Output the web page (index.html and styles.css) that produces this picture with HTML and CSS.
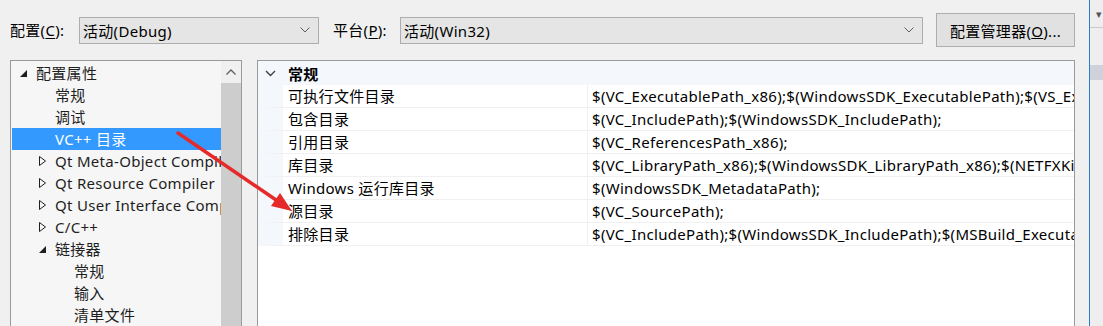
FILE: index.html
```html
<!DOCTYPE html>
<html lang="zh-CN">
<head>
  <meta charset="UTF-8" />
  <title>VC++ 目录 属性页</title>
  <link rel="stylesheet" href="styles.css">
</head>
<body>
  <div class="screen">
    <div class="dialog">
      <div class="toolbar">
        <span class="label label-config">配置(<u>C</u>):</span>
        <div class="combo combo-config">
          <span>活动(Debug)</span>
          <svg class="chev" width="10" height="6" viewBox="0 0 10 6"><polyline points="0.5,0.5 5,5 9.5,0.5" fill="none" stroke="#606060" stroke-width="1"/></svg>
        </div>
        <span class="label label-platform">平台(<u>P</u>):</span>
        <div class="combo combo-platform">
          <span>活动(Win32)</span>
          <svg class="chev" width="10" height="6" viewBox="0 0 10 6"><polyline points="0.5,0.5 5,5 9.5,0.5" fill="none" stroke="#606060" stroke-width="1"/></svg>
        </div>
        <button class="btn-manager">配置管理器(<u>O</u>)...</button>
      </div>

      <div class="panels">
        <div class="tree">
          <ul class="nodes">
            <li class="node lv0"><span class="tog"><svg width="7" height="7" viewBox="0 0 7 7"><polygon points="7,0 7,7 0,7" fill="#1e1e1e"/></svg></span>配置属性</li>
            <li class="node lv1"><span class="tog"></span>常规</li>
            <li class="node lv1"><span class="tog"></span>调试</li>
            <li class="node lv1 selected"><span class="tog"></span>VC++ 目录</li>
            <li class="node lv1 sub"><span class="tog"><svg width="7" height="10" viewBox="0 0 7 10"><polygon points="0.5,0.5 6.5,5 0.5,9.5" fill="none" stroke="#1e1e1e" stroke-width="1"/></svg></span>Qt Meta-Object Compiler</li>
            <li class="node lv1 sub"><span class="tog"><svg width="7" height="10" viewBox="0 0 7 10"><polygon points="0.5,0.5 6.5,5 0.5,9.5" fill="none" stroke="#1e1e1e" stroke-width="1"/></svg></span>Qt Resource Compiler</li>
            <li class="node lv1 sub"><span class="tog"><svg width="7" height="10" viewBox="0 0 7 10"><polygon points="0.5,0.5 6.5,5 0.5,9.5" fill="none" stroke="#1e1e1e" stroke-width="1"/></svg></span>Qt User Interface Compiler</li>
            <li class="node lv1 sub"><span class="tog"><svg width="7" height="10" viewBox="0 0 7 10"><polygon points="0.5,0.5 6.5,5 0.5,9.5" fill="none" stroke="#1e1e1e" stroke-width="1"/></svg></span>C/C++</li>
            <li class="node lv1 sub"><span class="tog"><svg width="7" height="7" viewBox="0 0 7 7"><polygon points="7,0 7,7 0,7" fill="#1e1e1e"/></svg></span>链接器</li>
            <li class="node lv2"><span class="tog"></span>常规</li>
            <li class="node lv2"><span class="tog"></span>输入</li>
            <li class="node lv2"><span class="tog"></span>清单文件</li>
          </ul>
          <div class="vscroll">
            <div class="vs-up"><svg width="10" height="6" viewBox="0 0 10 6"><polyline points="0.5,5.5 5,1 9.5,5.5" fill="none" stroke="#606060" stroke-width="1.3"/></svg></div>
            <div class="vs-thumb"></div>
          </div>
        </div>

        <div class="grid">
          <div class="category">
            <span class="cat-tog"><svg width="11" height="7" viewBox="0 0 11 7"><polyline points="1,1 5.5,5.5 10,1" fill="none" stroke="#404040" stroke-width="1.4"/></svg></span>
            <span class="cat-name">常规</span>
          </div>
          <div class="prop"><span class="pname">可执行文件目录</span><span class="pval">$(VC_ExecutablePath_x86);$(WindowsSDK_ExecutablePath);$(VS_ExecutablePath);$(MSBuild_ExecutablePath);$(SystemRoot)</span></div>
          <div class="prop"><span class="pname">包含目录</span><span class="pval">$(VC_IncludePath);$(WindowsSDK_IncludePath);</span></div>
          <div class="prop"><span class="pname">引用目录</span><span class="pval">$(VC_ReferencesPath_x86);</span></div>
          <div class="prop"><span class="pname">库目录</span><span class="pval">$(VC_LibraryPath_x86);$(WindowsSDK_LibraryPath_x86);$(NETFXKitsDir)Lib\um\x86</span></div>
          <div class="prop"><span class="pname">Windows 运行库目录</span><span class="pval">$(WindowsSDK_MetadataPath);</span></div>
          <div class="prop"><span class="pname">源目录</span><span class="pval">$(VC_SourcePath);</span></div>
          <div class="prop"><span class="pname">排除目录</span><span class="pval">$(VC_IncludePath);$(WindowsSDK_IncludePath);$(MSBuild_ExecutablePath);$(VC_LibraryPath_x86)</span></div>
        </div>
      </div>
    </div>

    <div class="edge">
      <div class="edge-top">▾</div>
      <div class="edge-band"></div>
    </div>

    <!-- annotation arrow drawn over the screenshot -->
    <svg class="arrow" width="1103" height="326" viewBox="0 0 1103 326">
      <line x1="178" y1="133" x2="279" y2="202" stroke="#e52a2a" stroke-width="3.5" stroke-linecap="round"/>
      <polygon points="292,211 280,193 271,206" fill="#e52a2a"/>
    </svg>
  </div>
</body>
</html>
```

FILE: styles.css
```css
body {
  margin: 0;
  font-family: "Noto Sans", "Noto Sans CJK SC", sans-serif;
  font-size: 15px;
  letter-spacing: 0.3px;
  color: #000;
  background-color: #f0f0f0;
}
.screen {
  position: relative;
  display: flex;
  width: 1103px;
  height: 326px;
  overflow: hidden;
}
.dialog {
  width: 1089px;
  flex-shrink: 0;
}
.edge {
  flex: 1;
  border-left: 1px solid #2b7bd3;
  background-color: #eeeeee;
}
.edge-top {
  height: 27px;
  border-bottom: 1px solid #c9c9c9;
  color: #555;
  font-size: 11px;
  line-height: 27px;
  padding-left: 6px;
  overflow: hidden;
}
.edge-band {
  margin-top: 37px;
  height: 15px;
  background-color: #cfd2da;
}

/* top row */
.toolbar {
  display: flex;
  align-items: center;
  height: 60px;
  padding-left: 10px;
}
.label {
  line-height: 20px;
  flex-shrink: 0;
}
.label u {
  text-decoration-thickness: 1px;
  text-underline-offset: 2px;
}
.label-config {
  width: 69px;
}
.label-platform {
  width: 67px;
  margin-left: 14px;
}
.combo {
  display: flex;
  align-items: center;
  justify-content: space-between;
  height: 27px;
  box-sizing: border-box;
  border: 1px solid #adadad;
  background-color: #e5e5e5;
  padding: 0 8px 0 3px;
  flex-shrink: 0;
}
.combo-config {
  width: 240px;
}
.combo-platform {
  width: 523px;
}
.chev {
  display: block;
}
.btn-manager {
  width: 139px;
  height: 34px;
  margin-left: 13px;
  border: 1px solid #adadad;
  background-color: #e1e1e1;
  font-family: inherit;
  font-size: 15px;
  letter-spacing: 0.3px;
  color: #000;
  padding: 0;
}

/* left tree */
.panels {
  display: flex;
  align-items: flex-start;
  padding-left: 10px;
  gap: 15px;
}
.tree {
  display: flex;
  width: 232px;
  height: 300px;
  box-sizing: border-box;
  border: 1px solid #9a9a9a;
  background-color: #f6f6f6;
}
.nodes {
  list-style: none;
  margin: 0;
  padding: 1px 0 0 0;
  width: 210px;
  overflow: hidden;
}
.node {
  display: flex;
  align-items: center;
  height: 22px;
  line-height: 22px;
  white-space: nowrap;
  color: #1e1e1e;
}
.node.lv0 { padding-left: 9px; }
.node.lv1 { padding-left: 28px; }
.node.lv2 { padding-left: 47px; }
.node.selected {
  background-color: #3399ff;
  color: #fff;
  margin-left: 1px;
  padding-left: 27px;
}
.tog {
  display: flex;
  align-items: center;
  width: 16px;
  flex-shrink: 0;
}
.tog svg {
  display: block;
}
.vscroll {
  width: 20px;
  display: flex;
  flex-direction: column;
}
.vs-up {
  height: 22px;
  display: flex;
  align-items: center;
  justify-content: center;
  background-color: #f0f0f0;
}
.vs-thumb {
  flex: 1;
  background-color: #cdcdcd;
}

/* property grid */
.grid {
  width: 818px;
  height: 300px;
  box-sizing: border-box;
  border: 1px solid #9a9a9a;
  background-color: #fff;
  overflow: hidden;
}
.category {
  display: flex;
  align-items: center;
  height: 24px;
  background-color: #f4f7fb;
}
.cat-tog {
  display: flex;
  width: 30px;
  padding-left: 7px;
  box-sizing: border-box;
}
.cat-name {
  font-weight: bold;
}
.prop {
  display: flex;
  height: 23px;
  box-sizing: border-box;
  border-left: 25px solid #f4f7fb;
  border-bottom: 1px solid #f0f0f0;
  line-height: 22px;
  white-space: nowrap;
}
.pname {
  width: 305px;
  flex-shrink: 0;
  padding-left: 5px;
  box-sizing: border-box;
  border-right: 1px solid #f0f0f0;
}
.pval {
  padding-left: 4px;
  overflow: hidden;
}

.arrow {
  position: absolute;
  left: 0;
  top: 0;
  pointer-events: none;
}
```
